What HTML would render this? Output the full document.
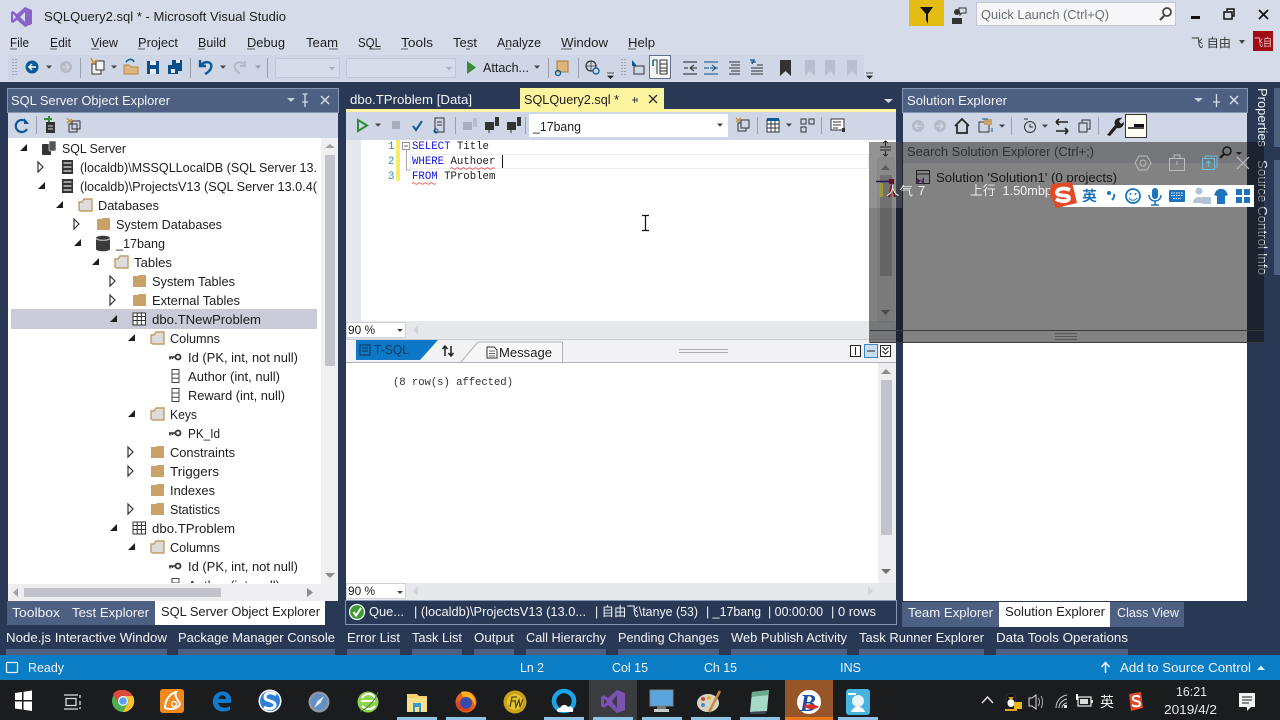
<!DOCTYPE html>
<html><head><meta charset="utf-8"><title>SQLQuery2.sql - Microsoft Visual Studio</title>
<style>
html,body{margin:0;padding:0;width:1280px;height:720px;overflow:hidden;background:#293955}
svg{display:block}
text{font-family:"Liberation Sans","Noto Sans CJK SC",sans-serif;font-size:13px;fill:#1e1e1e}
.w text,text.w{fill:#f2f4f8}
.m,.m text{font-family:"Liberation Mono","Noto Sans CJK SC",monospace;font-size:10.7px}
</style></head><body>
<svg width="1280" height="720" viewBox="0 0 1280 720" xmlns="http://www.w3.org/2000/svg">
<defs>
<g id="af"><path d="M5 -4V3H-2Z" fill="#1e1e1e"/></g>
<g id="ah"><path d="M-2 -5L3 0L-2 5Z" fill="#fff" stroke="#333" stroke-width="1.2"/></g>
<g id="fc"><path d="M0 -5H5L6 -6H13V6H0Z" fill="#c9a26a"/></g>
<g id="fo"><path d="M0 5V-3L3 -3L5 -6H13V6H2Z" fill="#dcdcdc" stroke="#c29c64" stroke-width="1.4"/></g>
<g id="tb"><rect x="0" y="-6" width="12.500" height="12" fill="#fff" stroke="#333"/><path d="M0 -2.500H12.500M0 1.500H12.500M4.200 -6V6M8.400 -6V6" stroke="#333" fill="none"/></g>
<g id="ky"><circle cx="9" cy="0" r="2.500" fill="none" stroke="#333" stroke-width="1.800"/><path d="M0 0H7M1 0V2.500M3.500 0V2" stroke="#333" stroke-width="1.500" fill="none"/></g>
<g id="cl"><rect x="0" y="-6.500" width="7" height="13" fill="#fff" stroke="#444"/><path d="M0 -2H7M0 2.200H7" stroke="#444"/></g>
<g id="dn"><path d="M-3 -1.500H3L0 1.800Z" fill="#444"/></g>
<g id="sv"><rect x="0" y="-7" width="11" height="14" fill="#333"/><path d="M1.500 -4H9.500M1.500 0H9.500M1.500 4H9.500" stroke="#ddd" stroke-width="1.300"/></g>
<clipPath id="tree"><rect x="8" y="138" width="310" height="445"/></clipPath>
</defs>

<!-- chrome -->
<rect width="1280" height="82" fill="#d6dbe9"/>
<rect y="82" width="1280" height="573" fill="#293955"/>
<path fill-rule="evenodd" d="M25 7L32 10V24L25 27L17 20L13 23L11 22V12L13 11L17 14ZM25 12L20 17L25 22ZM13 14V20L16 17Z" fill="#8a63c9"/>
<text x="44" y="21" textLength="242" lengthAdjust="spacingAndGlyphs">SQLQuery2.sql * - Microsoft Visual Studio</text>

<!-- menu -->
<g>
<text x="10" y="47" textLength="19" lengthAdjust="spacingAndGlyphs">File</text>
<text x="50" y="47" textLength="21" lengthAdjust="spacingAndGlyphs">Edit</text>
<text x="91" y="47" textLength="27" lengthAdjust="spacingAndGlyphs">View</text>
<text x="138" y="47" textLength="40" lengthAdjust="spacingAndGlyphs">Project</text>
<text x="198" y="47" textLength="28" lengthAdjust="spacingAndGlyphs">Build</text>
<text x="247" y="47" textLength="38" lengthAdjust="spacingAndGlyphs">Debug</text>
<text x="306" y="47" textLength="32" lengthAdjust="spacingAndGlyphs">Team</text>
<text x="358" y="47" textLength="23" lengthAdjust="spacingAndGlyphs">SQL</text>
<text x="401" y="47" textLength="32" lengthAdjust="spacingAndGlyphs">Tools</text>
<text x="453" y="47" textLength="24" lengthAdjust="spacingAndGlyphs">Test</text>
<text x="497" y="47" textLength="44" lengthAdjust="spacingAndGlyphs">Analyze</text>
<text x="561" y="47" textLength="47" lengthAdjust="spacingAndGlyphs">Window</text>
<text x="628" y="47" textLength="27" lengthAdjust="spacingAndGlyphs">Help</text>
<path d="M10 49H17M50 49H57M91 49H99M138 49H145M198 49H205M247 49H255M329 49H338M369 49H381M401 49H408M466 49H470M505 49H511M561 49H572M628 49H636" stroke="#333" stroke-width=".8"/>
</g>

<!-- top right -->
<rect x="909" y="0" width="35" height="26" fill="#e3bd12"/>
<path d="M920 7H933L928 14V24L926 20V14Z" fill="#111"/>
<circle cx="957" cy="12" r="3" fill="#333"/><path d="M952 24V18H962V24Z" fill="#333"/><path d="M959 8H966V13H962L960 15V13H959Z" fill="none" stroke="#333"/>
<rect x="976.500" y="2.500" width="199" height="23" fill="#f6f6f8" stroke="#c0c6d6"/>
<text x="981" y="19" textLength="128" lengthAdjust="spacingAndGlyphs" style="fill:#6a6e78">Quick Launch (Ctrl+Q)</text>
<circle cx="1167" cy="12" r="4" fill="none" stroke="#444" stroke-width="1.800"/><path d="M1164 16L1160 20" stroke="#444" stroke-width="2.200"/>
<rect x="1191" y="16" width="9" height="3" fill="#111"/>
<rect x="1224" y="12" width="8" height="7" fill="none" stroke="#111" stroke-width="1.500"/><path d="M1227 11V9H1234V16H1232" fill="none" stroke="#111" stroke-width="1.500"/>
<path d="M1259 10L1268 19M1268 10L1259 19" stroke="#111" stroke-width="1.800"/>
<text x="1191" y="47" textLength="40" lengthAdjust="spacingAndGlyphs" style="font-size:12px;fill:#333">飞 自由</text>
<path d="M1239 40H1245L1242 44Z" fill="#444"/>
<rect x="1253" y="31" width="20" height="20" fill="#a00c14"/>
<text x="1254" y="46" textLength="18" lengthAdjust="spacingAndGlyphs" style="font-size:11px;fill:#e8c8c8">飞自</text>

<!-- main toolbar -->
<rect x="8" y="55" width="856" height="25" fill="#cfd6e5"/>
<path d="M13 59V77M16 59V77" stroke="#8f97a8" stroke-width="1.500" stroke-dasharray="1 2"/>
<circle cx="32" cy="67" r="6.500" fill="#0b5a96"/><path d="M29 67H36M32 64L29 67L32 70" stroke="#fff" stroke-width="1.500" fill="none"/>
<use href="#dn" x="49" y="67"/>
<circle cx="66" cy="67" r="6" fill="#b4bac6"/><path d="M69 67H62M66 64L69 67L66 70" stroke="#dde" fill="none"/>
<path d="M80.500 58V78M190.500 58V78M267.500 58V78M548.500 58V78M578.500 58V78M675.500 58V78M770.500 58V78" stroke="#98a0b2"/>
<rect x="92" y="64" width="9" height="10" fill="#f4f4f4" stroke="#333"/><rect x="96" y="61" width="8" height="9" fill="#f4f4f4" stroke="#333"/><path d="M91 58L94 64M97 60L91 64" stroke="#c9912e" stroke-width="1.500"/>
<use href="#dn" x="114" y="67"/>
<path d="M124 74V65H129L131 67H138V74Z" fill="#dcb67a" stroke="#b58b4c"/><path d="M126 62C129 58 133 59 134 62" stroke="#0b5a96" fill="none" stroke-width="1.500"/>
<path d="M147 61H159V74H147Z" fill="#0b4f8a"/><rect x="150" y="61" width="6" height="4" fill="#e8ecf4"/><rect x="150" y="69" width="6" height="5" fill="#e8ecf4"/>
<path d="M172 60H182V71H178V74H168V65H172Z" fill="#0b4f8a"/><rect x="176" y="60" width="4" height="3" fill="#e8ecf4"/><rect x="171" y="69" width="4" height="4" fill="#e8ecf4"/>
<path d="M200 60V66H206M201 65C206 60 213 62 211 68C210 71 207 73 205 74" stroke="#0b5a96" stroke-width="2.400" fill="none"/>
<use href="#dn" x="223" y="67"/>
<path d="M245 61V66H240M245 65C240 60 233 63 235 68C236 71 239 73 240 74" stroke="#b4bac6" stroke-width="2" fill="none"/>
<use href="#dn" x="258" y="67" opacity=".4"/>
<rect x="275.500" y="58.500" width="64" height="19" fill="#d6dbe9" stroke="#c2c8d8"/><path d="M329 67H335L332 70Z" fill="#a8aebc"/>
<rect x="346.500" y="58.500" width="109" height="19" fill="#d6dbe9" stroke="#c2c8d8"/><path d="M446 67H452L449 70Z" fill="#a8aebc"/>
<path d="M467 61L476 67.500L467 74Z" fill="#388a34"/>
<text x="483" y="72" textLength="46" lengthAdjust="spacingAndGlyphs">Attach...</text>
<use href="#dn" x="537" y="67"/>
<rect x="557" y="61" width="11" height="11" fill="#dcb67a" stroke="#a97c3a"/><circle cx="558" cy="73" r="2.500" fill="none" stroke="#0b5a96" stroke-width="1.300"/>
<circle cx="591" cy="66" r="5" fill="none" stroke="#333" stroke-width="1.300"/><path d="M586 66H596M591 61V71" stroke="#333" stroke-width=".7"/><circle cx="596" cy="71" r="3" fill="#cfd6e5" stroke="#0b5a96" stroke-width="1.300"/>
<path d="M607 73H614M608 76H613L610.500 78.500Z" fill="#222" stroke="#222" stroke-width=".8"/>
<rect x="616" y="55" width="248" height="25" fill="#cfd6e5"/>
<path d="M622 59V77M625 59V77" stroke="#8f97a8" stroke-width="1.500" stroke-dasharray="1 2"/>
<path d="M632 60L637 66L632 66Z" fill="#0b5a96"/><path d="M634 66H644V74H634Z" fill="none" stroke="#333"/>
<rect x="649.500" y="55.500" width="21" height="23" fill="#f3f5f9" stroke="#5d6f8d"/>
<path d="M653 60H657V74M660 60H667V74H660ZM660 64H667M660 68H667M660 71H667" fill="none" stroke="#333"/><path d="M653 60V66" stroke="#0b5a96" stroke-width="1.500"/>
<path d="M683 62H697M683 74H697M684 68H688M690 68L694 65M690 68L694 71M691 68H697" stroke="#222" fill="none"/>
<path d="M704 62H718M704 74H718M704 68H709M716 68L712 65M716 68L712 71M710 68H718" stroke="#0b4f8a" fill="none"/>
<path d="M729 62H740M731 65H740M729 68H740M731 71H740M729 74H740" stroke="#333"/>
<path d="M751 62H756M757 65H763M751 68H763M751 71H763M751 74H763" stroke="#333"/><path d="M750 60H754L752 64" fill="none" stroke="#0b5a96" stroke-width="1.300"/>
<path d="M780 60H791V76L785.500 71L780 76Z" fill="#333"/>
<path d="M805 60H815V76L810 71L805 76Z" fill="#b8bfce"/><path d="M825 60H835V76L830 71L825 76Z" fill="#b8bfce"/><path d="M847 60H857V76L852 71L847 76Z" fill="#b8bfce"/>
<path d="M866 73H873M867 76H872L869.500 78.500Z" fill="#222" stroke="#222" stroke-width=".8"/>

<!-- LEFT PANEL -->
<rect x="7.500" y="88.500" width="331" height="24" fill="#4d6082" stroke="#8496b4"/>
<text class="w" x="11" y="105" textLength="159" lengthAdjust="spacingAndGlyphs">SQL Server Object Explorer</text>
<path d="M287 98H295L291 102Z" fill="#c4cede"/>
<path d="M305 94V102M302 102H308M305 102V107M302.500 94H307.500" stroke="#d6dbe9" stroke-width="1.300" fill="none"/>
<path d="M321 96L329 104M329 96L321 104" stroke="#d6dbe9" stroke-width="1.500"/>
<rect x="8" y="113" width="330" height="25" fill="#cfd6e5"/>
<rect x="8" y="138" width="330" height="463" fill="#fff"/>
<path d="M27 123A6 6 0 1 0 27 129" stroke="#0b5a96" stroke-width="2.200" fill="none"/><path d="M24 118V124H29Z" fill="#0b5a96"/>
<path d="M36.500 116V134" stroke="#98a0b2"/>
<rect x="46" y="122" width="9" height="11" fill="#333"/><path d="M44 119H52M49 116V122" stroke="#3a8a3a" stroke-width="2"/><path d="M48 126H53M48 129H53" stroke="#ddd"/>
<rect x="69" y="124" width="8" height="8" fill="none" stroke="#333"/><rect x="72" y="121" width="8" height="8" fill="none" stroke="#333"/><path d="M67 118L71 123M72 119L67 123" stroke="#c9912e" stroke-width="1.400"/>

<rect x="11" y="309" width="306" height="20" fill="#cacad8"/>
<g clip-path="url(#tree)">
<use href="#af" x="22" y="148"/>
<rect x="42" y="144" width="9" height="11" rx="1" fill="#333"/><rect x="49" y="141" width="7" height="10" rx="1" fill="#555" stroke="#fff" stroke-width=".6"/>
<text x="62" y="153" textLength="64" lengthAdjust="spacingAndGlyphs">SQL Server</text>
<use href="#ah" x="40" y="167"/><use href="#sv" x="62" y="167"/>
<text x="80" y="172" textLength="237" lengthAdjust="spacingAndGlyphs">(localdb)\MSSQLLocalDB (SQL Server 13.</text>
<use href="#af" x="40" y="186"/><use href="#sv" x="62" y="186"/>
<text x="80" y="191" textLength="237" lengthAdjust="spacingAndGlyphs">(localdb)\ProjectsV13 (SQL Server 13.0.4(</text>
<use href="#af" x="58" y="205"/><use href="#fo" x="79" y="205"/>
<text x="98" y="210" textLength="61" lengthAdjust="spacingAndGlyphs">Databases</text>
<use href="#ah" x="76" y="224"/><use href="#fc" x="97" y="224"/>
<text x="116" y="229" textLength="106" lengthAdjust="spacingAndGlyphs">System Databases</text>
<use href="#af" x="76" y="243"/>
<path d="M96 238C96 235 110 235 110 238V249C110 252 96 252 96 249Z" fill="#3a3a3a"/><path d="M96 238C96 241 110 241 110 238" stroke="#ccc" fill="none"/>
<text x="116" y="248" textLength="49" lengthAdjust="spacingAndGlyphs">_17bang</text>
<use href="#af" x="94" y="262"/><use href="#fo" x="115" y="262"/>
<text x="134" y="267" textLength="38" lengthAdjust="spacingAndGlyphs">Tables</text>
<use href="#ah" x="112" y="281"/><use href="#fc" x="133" y="281"/>
<text x="152" y="286" textLength="83" lengthAdjust="spacingAndGlyphs">System Tables</text>
<use href="#ah" x="112" y="300"/><use href="#fc" x="133" y="300"/>
<text x="152" y="305" textLength="88" lengthAdjust="spacingAndGlyphs">External Tables</text>
<use href="#af" x="112" y="319"/><use href="#tb" x="133" y="319"/>
<text x="152" y="324" textLength="109" lengthAdjust="spacingAndGlyphs">dbo.TNewProblem</text>
<use href="#af" x="130" y="338"/><use href="#fo" x="151" y="338"/>
<text x="170" y="343" textLength="50" lengthAdjust="spacingAndGlyphs">Columns</text>
<use href="#ky" x="169" y="357"/>
<text x="188" y="362" textLength="110" lengthAdjust="spacingAndGlyphs">Id (PK, int, not null)</text>
<use href="#cl" x="172" y="376"/>
<text x="188" y="381" textLength="92" lengthAdjust="spacingAndGlyphs">Author (int, null)</text>
<use href="#cl" x="172" y="395"/>
<text x="188" y="400" textLength="97" lengthAdjust="spacingAndGlyphs">Reward (int, null)</text>
<use href="#af" x="130" y="414"/><use href="#fo" x="151" y="414"/>
<text x="170" y="419" textLength="27" lengthAdjust="spacingAndGlyphs">Keys</text>
<use href="#ky" x="169" y="433"/>
<text x="188" y="438" textLength="32" lengthAdjust="spacingAndGlyphs">PK_Id</text>
<use href="#ah" x="130" y="452"/><use href="#fc" x="151" y="452"/>
<text x="170" y="457" textLength="65" lengthAdjust="spacingAndGlyphs">Constraints</text>
<use href="#ah" x="130" y="471"/><use href="#fc" x="151" y="471"/>
<text x="170" y="476" textLength="49" lengthAdjust="spacingAndGlyphs">Triggers</text>
<use href="#fc" x="151" y="490"/>
<text x="170" y="495" textLength="45" lengthAdjust="spacingAndGlyphs">Indexes</text>
<use href="#ah" x="130" y="509"/><use href="#fc" x="151" y="509"/>
<text x="170" y="514" textLength="50" lengthAdjust="spacingAndGlyphs">Statistics</text>
<use href="#af" x="112" y="528"/><use href="#tb" x="133" y="528"/>
<text x="152" y="533" textLength="83" lengthAdjust="spacingAndGlyphs">dbo.TProblem</text>
<use href="#af" x="130" y="547"/><use href="#fo" x="151" y="547"/>
<text x="170" y="552" textLength="50" lengthAdjust="spacingAndGlyphs">Columns</text>
<use href="#ky" x="169" y="566"/>
<text x="188" y="571" textLength="110" lengthAdjust="spacingAndGlyphs">Id (PK, int, not null)</text>
<use href="#cl" x="172" y="585"/>
<text x="188" y="590" textLength="92" lengthAdjust="spacingAndGlyphs">Author (int, null)</text>
</g>
<rect x="321" y="138" width="17" height="447" fill="#f0f0f3"/>
<rect x="325" y="155" width="10" height="211" fill="#c3c4cb"/>
<path d="M325 148H335L330 144Z" fill="#a0a2aa"/><path d="M325 573H335L330 578Z" fill="#8a8c94"/>
<rect x="8" y="584" width="330" height="17" fill="#eeeef1"/>
<rect x="24" y="588" width="197" height="9" fill="#c3c4cb"/>
<path d="M18 588V597L13 592.500Z" fill="#a0a2aa"/><path d="M307 588V597L313 592.500Z" fill="#8a8c94"/>
<rect x="7" y="601" width="148" height="24" fill="#4d6082"/>
<rect x="155" y="601" width="170" height="24" fill="#fff"/>
<text class="w" x="12" y="617" textLength="48" lengthAdjust="spacingAndGlyphs">Toolbox</text>
<text class="w" x="72" y="617" textLength="77" lengthAdjust="spacingAndGlyphs">Test Explorer</text>
<text x="161" y="616" textLength="159" lengthAdjust="spacingAndGlyphs">SQL Server Object Explorer</text>

<!-- CENTER tabs -->
<rect x="520" y="88" width="144" height="21" fill="#fdf4a0"/>
<rect x="346" y="109" width="550" height="3" fill="#fdf4a0"/>
<text class="w" x="350" y="104" textLength="122" lengthAdjust="spacingAndGlyphs">dbo.TProblem [Data]</text>
<text x="524" y="104" textLength="95" lengthAdjust="spacingAndGlyphs">SQLQuery2.sql *</text>
<path d="M632 100H637M634.500 97V103M637 98V102" stroke="#444" fill="none"/>
<path d="M649 95L657 103M657 95L649 103" stroke="#333" stroke-width="1.400"/>
<path d="M884 99H893L888.500 103Z" fill="#d6dbe9"/>
<rect x="346" y="112" width="550" height="28" fill="#cfd6e5"/>
<path d="M358 120L367 125.500L358 131Z" fill="none" stroke="#2f8a34" stroke-width="2"/>
<use href="#dn" x="378" y="125"/>
<rect x="392" y="121" width="8" height="8" fill="#a8aebc"/>
<path d="M413 126L416 130L422 121" stroke="#0b5a96" stroke-width="2" fill="none"/>
<rect x="435" y="118" width="9" height="14" fill="none" stroke="#333"/><path d="M437 122H442M437 125H442" stroke="#333"/><circle cx="436" cy="131" r="2" fill="none" stroke="#0b5a96"/>
<path d="M455.500 117V134M525.500 117V134M757.500 117V134M821.500 117V134" stroke="#98a0b2"/>
<rect x="463" y="122" width="9" height="8" fill="#a8aebc"/><rect x="473" y="118" width="4" height="9" fill="#b8bfce"/>
<rect x="485" y="122" width="9" height="8" fill="#333"/><rect x="495" y="117" width="4" height="9" fill="#333"/><path d="M489 130V133" stroke="#333"/>
<rect x="507" y="122" width="9" height="8" fill="#333"/><rect x="517" y="117" width="4" height="9" fill="#333"/><path d="M511 130V133" stroke="#333"/>
<rect x="529" y="114" width="199" height="23" fill="#fff"/>
<text x="533" y="131" textLength="48" lengthAdjust="spacingAndGlyphs">_17bang</text>
<use href="#dn" x="720" y="125"/>
<rect x="738" y="123" width="8" height="8" fill="none" stroke="#333"/><rect x="741" y="120" width="8" height="8" fill="#cfd6e5" stroke="#333"/><path d="M736 118L740 122M741 118L736 122" stroke="#c9912e" stroke-width="1.300"/>
<rect x="767" y="120" width="12" height="12" fill="#fff" stroke="#333"/><path d="M767 124H779M767 128H779M771 120V132M775 120V132" stroke="#333"/><rect x="767" y="118" width="12" height="3" fill="#0b5a96"/>
<use href="#dn" x="789" y="125"/>
<rect x="801" y="119" width="5" height="5" fill="none" stroke="#333"/><rect x="809" y="119" width="5" height="5" fill="none" stroke="#333"/><rect x="801" y="127" width="5" height="5" fill="none" stroke="#333"/>
<rect x="831" y="119" width="13" height="11" fill="#fff" stroke="#333"/><path d="M833 122H841M833 125H841M833 128H838" stroke="#333"/><rect x="842" y="128" width="3" height="4" fill="#333"/>

<!-- editor -->
<rect x="346" y="140" width="550" height="181" fill="#fff"/>
<rect x="346" y="140" width="15" height="181" fill="#e7e8ec"/>
<rect x="396" y="140" width="4" height="41" fill="#f5ec6e"/>
<rect x="410.500" y="154.500" width="458" height="14" fill="none" stroke="#ececf2"/>
<g class="m">
<text x="388" y="149" style="fill:#2b91af">1</text>
<text x="388" y="164" style="fill:#2b91af">2</text>
<text x="388" y="179" style="fill:#2b91af">3</text>
<text x="412" y="149"><tspan style="fill:#1414e6">SELECT</tspan> Title</text>
<text x="412" y="164"><tspan style="fill:#1414e6">WHERE</tspan> Authoer</text>
<text x="412" y="179"><tspan style="fill:#1414e6">FROM</tspan> TProblem</text>
</g>
<rect x="402.500" y="142.500" width="7" height="7" fill="#fff" stroke="#999"/><path d="M404 146H408" stroke="#666"/><path d="M406.500 150V170H411" stroke="#aaa" fill="none"/>
<path d="M450 168.500q1.500 -1.500 3 0t3 0t3 0t3 0t3 0t3 0t3 0t3 0t3 0t3 0t3 0t3 0t3 0t3 0t3 0" fill="none" stroke="#e03030" stroke-width=".8"/>
<path d="M412 183.500q1.500 -1.500 3 0t3 0t3 0t3 0t3 0t3 0t3 0t3 0" fill="none" stroke="#e03030" stroke-width=".8"/>
<path d="M502.500 155V168" stroke="#111"/>
<path d="M642 215.500H649M642 230.500H649M645.500 216V230" stroke="#111" stroke-width="1.200"/>

<rect x="346" y="321" width="550" height="18" fill="#e7e8ec"/>
<rect x="346.500" y="322.500" width="59" height="15" fill="#fff" stroke="#cfd2d8"/>
<text x="348" y="334" textLength="27" lengthAdjust="spacingAndGlyphs" style="font-size:12px">90 %</text>
<path d="M397 329H403L400 332Z" fill="#444"/>
<path d="M418 325V335L413 330Z" fill="#d2d4da"/>
<rect x="346" y="339" width="550" height="23" fill="#f2f2f4"/>
<path d="M346 339.500H896" stroke="#c9ccd2"/><path d="M346 362.500H896" stroke="#b0b3ba"/>
<path d="M356 340H438L420 360H356Z" fill="#0c78c6"/>
<rect x="360" y="345" width="10" height="10" fill="none" stroke="#10305a"/><path d="M362 348H368M362 351H368" stroke="#10305a"/>
<text x="374" y="354" textLength="35" lengthAdjust="spacingAndGlyphs" style="fill:#123a6a">T-SQL</text>
<path d="M445 356V346M442.500 349L445 346L447.500 349M451 346V356M448.500 353L451 356L453.500 353" fill="none" stroke="#222" stroke-width="1.500"/>
<path d="M461 362L478 342H562.500V362" fill="#f7f7f9" stroke="#b0b3ba"/>
<path d="M487 347H494L497 350V358H487Z" fill="#fff" stroke="#333"/><path d="M489 351H495M489 353.500H495M489 356H495" stroke="#333" stroke-width=".7"/>
<text x="499" y="357" textLength="53" lengthAdjust="spacingAndGlyphs">Message</text>
<path d="M679 349.500H728M679 352.500H728" stroke="#a9abb2"/>
<rect x="850.500" y="345.500" width="10" height="11" fill="#fff" stroke="#222"/><path d="M855.500 347V355" stroke="#222"/>
<rect x="864.500" y="344.500" width="13" height="13" fill="#c9def2" stroke="#3a86c8"/><path d="M867 351H875" stroke="#222"/>
<rect x="880.500" y="345.500" width="10" height="11" fill="#fff" stroke="#222"/><path d="M882.500 347L885.500 350L888.500 347M882.500 351L885.500 354L888.500 351" stroke="#222" fill="none"/>

<!-- results -->
<rect x="346" y="363" width="550" height="220" fill="#fff"/>
<rect x="878" y="363" width="18" height="220" fill="#eeeef1"/>
<rect x="881" y="380" width="11" height="155" fill="#c3c4cb"/>
<path d="M881 374H891L886 369Z" fill="#8a8c94"/><path d="M881 569H891L886 574Z" fill="#6f7178"/>
<text class="m" x="393" y="385" textLength="120" style="fill:#333">(8 row(s) affected)</text>
<rect x="346" y="583" width="550" height="18" fill="#e7e8ec"/>
<rect x="346.500" y="583.500" width="59" height="15" fill="#fff" stroke="#cfd2d8"/>
<text x="348" y="595" textLength="27" lengthAdjust="spacingAndGlyphs" style="font-size:12px">90 %</text>
<path d="M397 591H403L400 594Z" fill="#444"/>
<path d="M418 586V596L413 591Z" fill="#d2d4da"/><path d="M868 586V596L873 591Z" fill="#d2d4da"/>
<!-- query status -->
<rect x="345.500" y="600.500" width="551" height="24" fill="#293955" stroke="#8496b4"/>
<circle cx="357" cy="612" r="7.500" fill="#3f9c35" stroke="#fff" stroke-width="1.200"/><path d="M353.500 612L356 615.500L361 608" stroke="#fff" stroke-width="2" fill="none"/>
<g class="w">
<text x="369" y="616" textLength="35" lengthAdjust="spacingAndGlyphs">Que...</text>
<text x="414" y="616" textLength="172" lengthAdjust="spacingAndGlyphs">| (localdb)\ProjectsV13 (13.0...</text>
<text x="595" y="616" textLength="103" lengthAdjust="spacingAndGlyphs">| 自由飞\tanye (53)</text>
<text x="706" y="616" textLength="55" lengthAdjust="spacingAndGlyphs">| _17bang</text>
<text x="768" y="616" textLength="55" lengthAdjust="spacingAndGlyphs">| 00:00:00</text>
<text x="831" y="616" textLength="45" lengthAdjust="spacingAndGlyphs">| 0 rows</text>
</g>

<!-- SOLUTION EXPLORER -->
<rect x="902.500" y="88.500" width="345" height="24" fill="#4d6082" stroke="#8496b4"/>
<text class="w" x="907" y="105" textLength="100" lengthAdjust="spacingAndGlyphs">Solution Explorer</text>
<path d="M1194 98H1203L1198.500 102Z" fill="#c4cede"/>
<path d="M1216.500 94V102M1213 102H1220M1216.500 102V107" stroke="#d6dbe9" stroke-width="1.300" fill="none"/>
<path d="M1230 96L1238 104M1238 96L1230 104" stroke="#d6dbe9" stroke-width="1.500"/>
<rect x="903" y="113" width="344" height="29" fill="#cfd6e5"/>
<circle cx="918" cy="126" r="6" fill="#b4bac6"/><circle cx="940" cy="126" r="6" fill="#b4bac6"/>
<path d="M922 126H915M918 123L915 126L918 129M936 126H943M940 123L943 126L940 129" stroke="#dde" fill="none"/>
<path d="M955 126L962 119L969 126M957 125V133H967V125" fill="none" stroke="#222" stroke-width="1.700"/>
<rect x="979" y="122" width="10" height="10" fill="none" stroke="#333"/><rect x="984" y="119" width="8" height="6" fill="#c9a26a"/><path d="M982 119H988M992 128V132" stroke="#0b5a96"/>
<use href="#dn" x="1002" y="126"/>
<path d="M1011.500 117V135" stroke="#98a0b2"/>
<circle cx="1030" cy="127" r="5.500" fill="none" stroke="#333"/><path d="M1030 124V127H1033M1024 119H1028" stroke="#333" fill="none"/>
<use href="#dn" x="1045" y="126"/>
<path d="M1056 122H1068M1056 122L1059 119M1056 131H1068M1068 131L1065 128M1056 122L1059 125M1068 131L1065 134" stroke="#222" stroke-width="1.600" fill="none"/>
<rect x="1079" y="123" width="8" height="9" fill="none" stroke="#333"/><path d="M1082 123V120H1090V129H1087" fill="none" stroke="#333"/>
<path d="M1098.500 117V135" stroke="#98a0b2"/>
<path d="M1107 135L1115 125C1113 120 1118 117 1122 118L1119 121L1121 124L1124 122C1124 127 1120 129 1117 128L1110 136Z" fill="#222"/>
<rect x="1125.500" y="114.500" width="21" height="23" fill="#fffdf2" stroke="#333"/>
<rect x="1134" y="124" width="10" height="3" fill="#111"/><path d="M1128 128H1144" stroke="#111" stroke-width="1.500"/>
<rect x="903" y="142" width="344" height="21" fill="#e1e5ef"/>
<text x="907" y="156" textLength="187" lengthAdjust="spacingAndGlyphs" style="fill:#555">Search Solution Explorer (Ctrl+;)</text>
<circle cx="1227" cy="151" r="4" fill="none" stroke="#222" stroke-width="1.500"/><path d="M1224 154L1220 158" stroke="#222" stroke-width="2"/>
<path d="M1236 152H1242L1239 155Z" fill="#333"/>
<rect x="903" y="163" width="344" height="438" fill="#fff"/>
<rect x="916.500" y="170.500" width="13" height="13" fill="#fff" stroke="#333"/><path d="M917 174H930" stroke="#333"/>
<path d="M917 178L921 181L924 177V185L921 181L917 184Z" fill="#7a3fb0"/>
<text x="936" y="182" textLength="181" lengthAdjust="spacingAndGlyphs">Solution 'Solution1' (0 projects)</text>
<rect x="902" y="602" width="97" height="25" fill="#4d6082"/>
<rect x="999" y="602" width="111" height="25" fill="#fff"/>
<rect x="1110" y="602" width="74" height="25" fill="#4d6082"/>
<text class="w" x="908" y="617" textLength="85" lengthAdjust="spacingAndGlyphs">Team Explorer</text>
<text x="1005" y="616" textLength="100" lengthAdjust="spacingAndGlyphs">Solution Explorer</text>
<text class="w" x="1117" y="617" textLength="62" lengthAdjust="spacingAndGlyphs">Class View</text>

<!-- right strip -->
<rect x="1274" y="88" width="6" height="59" fill="#4d6082"/><rect x="1274" y="160" width="6" height="115" fill="#4d6082"/>
<text class="w" transform="translate(1258,88) rotate(90)" textLength="59" lengthAdjust="spacingAndGlyphs">Properties</text>
<text class="w" transform="translate(1258,160) rotate(90)" textLength="115" lengthAdjust="spacingAndGlyphs">Source Control Info</text>

<!-- translucent overlay window -->
<rect x="869" y="142" width="395" height="201" fill="#101010" fill-opacity=".52"/>
<rect x="869" y="142" width="33" height="66" fill="#fff" fill-opacity=".14"/>
<path d="M880 147H891M880 150H891M885.500 141V146M885.500 151V156M883 143L885.500 141L888 143M883 154L885.500 156L888 154" stroke="#222" fill="none"/>
<rect x="877" y="157" width="18" height="165" fill="#000" fill-opacity=".06"/>
<rect x="880" y="175" width="12" height="101" fill="#000" fill-opacity=".18"/>
<path d="M881 170H890L885.500 165Z" fill="#5a5a5a"/><path d="M881 310H890L885.500 315Z" fill="#4a4a4a"/>
<rect x="879" y="183" width="4" height="14" fill="#9b9b3a"/>
<path d="M876 181.500H893" stroke="#1a1a5a" stroke-width="1.500"/><rect x="889" y="179" width="5" height="5" fill="#6a1020"/>
<path d="M889 197L892 185L895 197" stroke="#7a1010" stroke-width="2" fill="none"/>
<path d="M870 330.500H1264M870 342.500H1264" stroke="#3a3a3a"/>
<path d="M1055 333.500H1077M1055 336.500H1077M1055 339.500H1077" stroke="#555"/>
<text x="886" y="195" textLength="27" lengthAdjust="spacingAndGlyphs" style="fill:#f0f0f0;font-size:12px">人气</text>
<text x="918" y="195" style="fill:#f0f0f0;font-size:13px">7</text>
<text x="970" y="195" textLength="82" lengthAdjust="spacingAndGlyphs" style="fill:#f0f0f0;font-size:13px">上行 &#160;1.50mbp</text>
<g fill="none" stroke="#bdbdbd">
<circle cx="1143" cy="163" r="3"/><path d="M1139 156H1147L1151 163L1147 170H1139L1135 163Z" stroke-linejoin="round"/>
<rect x="1169.500" y="158.500" width="15" height="12"/><path d="M1174 158V155H1180V158M1177 161V165"/>
</g>
<g fill="none" stroke="#6cc0dc"><rect x="1202.500" y="158.500" width="12" height="11"/><path d="M1205 158V156H1217V167H1215M1208.500 167V161M1206 163L1208.500 161L1211 163"/></g>
<path d="M1237 157L1249 169M1249 157L1237 169" stroke="#bdbdbd" stroke-width="1.200"/>

<!-- IME bar -->
<rect x="1063" y="185" width="191" height="22" fill="#fff"/>
<path d="M1052 184L1072 182L1077 203L1056 208L1049 193Z" fill="#e04a26"/>
<path d="M1070 190C1064 187 1056 189 1057 193C1058 197 1069 194 1069 198C1069 202 1061 202 1056 199" fill="none" stroke="#fff" stroke-width="3.800"/>
<text x="1082" y="201" textLength="15" lengthAdjust="spacingAndGlyphs" style="fill:#1c74bd;font-size:14px;font-weight:bold">英</text>
<circle cx="1109" cy="193" r="2" fill="#1c74bd"/><path d="M1114 194C1115 197 1113 199 1112 200" stroke="#1c74bd" stroke-width="2" fill="none"/>
<circle cx="1133" cy="196" r="7" fill="none" stroke="#1c74bd" stroke-width="1.800"/><circle cx="1130.500" cy="194" r="1" fill="#1c74bd"/><circle cx="1135.500" cy="194" r="1" fill="#1c74bd"/><path d="M1129 198C1131 201 1135 201 1137 198" stroke="#1c74bd" fill="none"/>
<rect x="1152" y="188" width="6" height="11" rx="3" fill="#1c74bd"/><path d="M1149 195C1149 203 1161 203 1161 195M1155 201V205M1151 205H1159" stroke="#1c74bd" stroke-width="1.500" fill="none"/>
<rect x="1169" y="190" width="16" height="12" rx="1" fill="#1c74bd"/><path d="M1171 193H1183M1171 195.500H1183M1173 198.500H1181" stroke="#fff" stroke-dasharray="1.500 1"/>
<circle cx="1199" cy="191" r="3.500" fill="#b4c4d4"/><path d="M1193 203C1193 195 1205 195 1205 203Z" fill="#b4c4d4"/><rect x="1202" y="197" width="9" height="7" fill="#b4c4d4"/>
<path d="M1216 191L1219 189H1223L1226 191L1228 195L1225 196V204H1217V196L1214 195Z" fill="#1c74bd"/>
<rect x="1236" y="189" width="6" height="6" fill="#1c74bd"/><rect x="1244" y="189" width="6" height="6" fill="#1c74bd"/><rect x="1236" y="197" width="6" height="6" fill="#1c74bd"/><rect x="1244" y="197" width="6" height="6" fill="#1c74bd"/>

<!-- tool windows row -->
<rect x="6" y="649" width="161" height="6" fill="#4d6082"/><rect x="178" y="649" width="157" height="6" fill="#4d6082"/><rect x="347" y="649" width="53" height="6" fill="#4d6082"/><rect x="412" y="649" width="50" height="6" fill="#4d6082"/><rect x="474" y="649" width="40" height="6" fill="#4d6082"/><rect x="526" y="649" width="80" height="6" fill="#4d6082"/><rect x="618" y="649" width="101" height="6" fill="#4d6082"/><rect x="731" y="649" width="116" height="6" fill="#4d6082"/><rect x="859" y="649" width="125" height="6" fill="#4d6082"/><rect x="996" y="649" width="132" height="6" fill="#4d6082"/>
<g class="w">
<text x="6" y="642" textLength="161" lengthAdjust="spacingAndGlyphs">Node.js Interactive Window</text>
<text x="178" y="642" textLength="157" lengthAdjust="spacingAndGlyphs">Package Manager Console</text>
<text x="347" y="642" textLength="53" lengthAdjust="spacingAndGlyphs">Error List</text>
<text x="412" y="642" textLength="50" lengthAdjust="spacingAndGlyphs">Task List</text>
<text x="474" y="642" textLength="40" lengthAdjust="spacingAndGlyphs">Output</text>
<text x="526" y="642" textLength="80" lengthAdjust="spacingAndGlyphs">Call Hierarchy</text>
<text x="618" y="642" textLength="101" lengthAdjust="spacingAndGlyphs">Pending Changes</text>
<text x="731" y="642" textLength="116" lengthAdjust="spacingAndGlyphs">Web Publish Activity</text>
<text x="859" y="642" textLength="125" lengthAdjust="spacingAndGlyphs">Task Runner Explorer</text>
<text x="996" y="642" textLength="132" lengthAdjust="spacingAndGlyphs">Data Tools Operations</text>
</g>

<!-- status bar -->
<rect y="655" width="1280" height="25" fill="#0b7dc4"/>
<g class="w">
<rect x="6.500" y="662.500" width="11" height="10" rx="1" fill="none" stroke="#e8f2fa" stroke-width="1.300"/>
<text x="28" y="672" textLength="36" lengthAdjust="spacingAndGlyphs">Ready</text>
<text x="520" y="672" textLength="24" lengthAdjust="spacingAndGlyphs">Ln 2</text>
<text x="612" y="672" textLength="36" lengthAdjust="spacingAndGlyphs">Col 15</text>
<text x="704" y="672" textLength="33" lengthAdjust="spacingAndGlyphs">Ch 15</text>
<text x="840" y="672" textLength="21" lengthAdjust="spacingAndGlyphs">INS</text>
<text x="1120" y="672" textLength="131" lengthAdjust="spacingAndGlyphs">Add to Source Control</text>
<path d="M1105.500 673V663M1101.500 667L1105.500 662.500L1109.500 667" stroke="#e8f2fa" stroke-width="1.500" fill="none"/>
<path d="M1257 670H1265L1261 665.500Z" fill="#e8f2fa"/>
</g>

<!-- taskbar -->
<rect y="680" width="1280" height="40" fill="#1b1c1e"/>
<rect x="589" y="680" width="48" height="40" fill="#3b3c40"/>
<rect x="785" y="680" width="48" height="40" fill="#96562a"/>
<g fill="#8fc3e6">
<rect x="397" y="717" width="40" height="3"/><rect x="446" y="717" width="40" height="3"/><rect x="544" y="717" width="40" height="3"/><rect x="593" y="717" width="40" height="3"/><rect x="642" y="717" width="40" height="3"/><rect x="691" y="717" width="40" height="3"/><rect x="740" y="717" width="40" height="3"/><rect x="838" y="717" width="40" height="3"/>
</g>
<rect x="785" y="717" width="48" height="3" fill="#e8781c"/>
<!-- win -->
<path d="M15 693L22 692V700H15ZM23.500 691.700L32 690.500V700H23.500ZM15 701.500H22V709.500L15 708.500ZM23.500 701.500H32V711L23.500 709.800Z" fill="#fff"/>
<!-- task view -->
<path d="M64 695H78M64 709H78M66 698.500H76V705.500H66ZM80 695V698M80 701V705M80 707V709" fill="none" stroke="#ddd" stroke-width="1.300"/>
<!-- chrome -->
<circle cx="123" cy="701" r="11" fill="#4caf50"/>
<path d="M123 690A11 11 0 0 1 133 696H123A5 5 0 0 0 118 703L113 694A11 11 0 0 1 123 690Z" fill="#dd4b3e"/>
<path d="M133 696A11 11 0 0 1 123 712L128 703A5 5 0 0 0 123 696Z" fill="#fbc02d"/>
<circle cx="123" cy="701" r="5" fill="#fff"/><circle cx="123" cy="701" r="3.800" fill="#5a9cf0"/>
<!-- uc -->
<rect x="160" y="689" width="24" height="24" rx="3" fill="#f08a1e"/><path d="M165 708C165 698 172 693 176 692C174 696 178 700 180 704C178 709 170 710 165 708Z" fill="none" stroke="#fff" stroke-width="2"/><circle cx="174" cy="704" r="2.500" fill="none" stroke="#fff" stroke-width="1.300"/>
<!-- edge -->
<path d="M213 703C212 694 220 690 226 692C230 694 232 698 231 703H218C219 708 226 709 230 706V710C224 713 214 712 213 703ZM218.500 699H226C226 694 219 694 218.500 699Z" fill="#0f7bd0"/>
<!-- sogou browser -->
<circle cx="270" cy="701" r="11.500" fill="#fff"/><circle cx="270" cy="701" r="10" fill="#2e80d8"/>
<path d="M276 695C271 691 265 693 265 697C265 702 275 700 275 705C275 709 268 710 264 707" fill="none" stroke="#fff" stroke-width="3"/>
<!-- safari -->
<circle cx="319" cy="702" r="10.500" fill="#8c96a4"/><circle cx="319" cy="702" r="8" fill="#5f8fc4"/><path d="M324 696L320.500 703L314 708L317.500 701Z" fill="#e8e8e8"/>
<!-- 360 ie -->
<circle cx="368" cy="702" r="10.500" fill="#8ed24e"/><path d="M361 701H375M362 698C366 692 372 693 375 698M362 706C366 710 372 710 375 706" stroke="#fff" stroke-width="2" fill="none"/><path d="M360 711C364 711 375 702 378 692" stroke="#3a8a22" fill="none"/>
<!-- explorer -->
<path d="M407 694H417L419 696H427V712H407Z" fill="#f3d26e"/><rect x="407" y="698" width="20" height="14" fill="#f8e08a"/><rect x="413" y="703" width="8" height="9" fill="#2f9bd0"/><rect x="415" y="707" width="4" height="5" fill="#f8e08a"/>
<!-- firefox -->
<circle cx="466" cy="702" r="10.500" fill="#e8601c"/><circle cx="466" cy="703" r="6" fill="#3a4aa8"/><path d="M461 692C470 689 477 697 475 706C473 699 469 696 463 697Z" fill="#f8b41e"/><path d="M456 703C457 711 467 714 473 708C466 711 460 708 458 700Z" fill="#d9401c"/>
<!-- fw -->
<circle cx="515" cy="702" r="11.500" fill="#c8a218"/><circle cx="515" cy="702" r="8" fill="#e4c436"/><path d="M510 707L512 697H517M511 701H515M515 700L516 707L519 700L520 707L523 699" stroke="#5a4a08" stroke-width="1.300" fill="none"/>
<!-- q -->
<circle cx="564" cy="701" r="10" fill="none" stroke="#19a6e8" stroke-width="4.500"/><path d="M560 708C562 704 566 704 568 707C571 705 574 708 573 712H558C556 711 557 708 560 708Z" fill="#fff"/>
<!-- VS -->
<path fill-rule="evenodd" d="M617 690L625 693V710L617 713L608 705L604 708L601 706V697L604 695L608 698ZM617 695L612 701.500L617 708ZM604 698.500V704.500L607 701.500Z" fill="#7952b3"/>
<!-- monitor -->
<rect x="650" y="690" width="23" height="16" fill="#5aa6dc" stroke="#7a8288"/><rect x="657" y="706" width="9" height="3" fill="#777"/><rect x="654" y="709" width="15" height="3" fill="#ccc"/>
<!-- palette -->
<ellipse cx="708" cy="703" rx="11" ry="9" fill="#d8d4c4"/><circle cx="703" cy="699" r="2" fill="#d04a3a"/><circle cx="709" cy="698" r="2" fill="#e8b03a"/><circle cx="703" cy="705" r="2" fill="#4a90d0"/><path d="M709 712L720 691" stroke="#c88a3a" stroke-width="2.500"/>
<!-- notepad -->
<path d="M752 692L769 690L767 711L750 712Z" fill="#a8d8c8"/><path d="M752 692L769 690L768.500 695L751.500 697Z" fill="#6aa890"/><path d="M751 712L767 711L765 714L749 714Z" fill="#445"/>
<!-- blog logo -->
<circle cx="809" cy="702" r="12" fill="#fff"/>
<text x="800" y="711" style="font-size:24px;font-weight:bold;font-style:italic;fill:#1c4fa0;font-family:'Liberation Serif',serif">B</text>
<path d="M803 706C808 704 813 703 819 707C814 710 809 710 803 706Z" fill="#d8302a"/>
<!-- live -->
<rect x="846" y="689" width="24" height="26" rx="3" fill="#46b4dc"/><circle cx="858" cy="701" r="6" fill="#e8f6fc"/><path d="M851 712C853 705 863 705 865 712Z" fill="#fff"/><path d="M848 694H856" stroke="#fff" stroke-width="2"/>
<!-- tray -->
<path d="M982 703L987.500 697L993 703" stroke="#e8e8e8" stroke-width="1.400" fill="none"/>
<ellipse cx="1011" cy="699" rx="5" ry="6" fill="#111" stroke="#555" stroke-width=".5"/><ellipse cx="1011" cy="703" rx="3.500" ry="4" fill="#fff"/><path d="M1005 710H1017" stroke="#e8a020" stroke-width="2"/><path d="M1008 697H1014L1011 700Z" fill="#e8a020"/><rect x="1014" y="702" width="8" height="7" fill="#e8b820"/>
<path d="M1029 698H1032L1036 695V709L1032 706H1029Z" fill="none" stroke="#ddd"/><path d="M1038 698C1040 700 1040 704 1038 706M1041 696C1043 699 1043 705 1041 708" stroke="#aaa" fill="none"/>
<path d="M1056 708C1056 702 1060 696 1067 695M1059 708C1059 704 1062 700 1067 699M1062 708C1062 706 1064 703 1067 703" stroke="#ccc" fill="none"/><rect x="1064" y="705" width="3" height="3" fill="#ddd"/>
<rect x="1078" y="697" width="13" height="9" fill="none" stroke="#ddd" stroke-width="1.300"/><rect x="1080" y="699" width="8" height="5" fill="#ddd"/><rect x="1091" y="700" width="2" height="3" fill="#ddd"/><path d="M1077 694V700" stroke="#fff" stroke-width="2"/>
<text x="1100" y="707" textLength="14" lengthAdjust="spacingAndGlyphs" style="fill:#f2f2f2;font-size:14px">英</text>
<path d="M1129 694L1141 692L1143 708L1131 711Z" fill="#e04a26"/>
<path d="M1140 697C1136 695 1132 696 1133 699C1134 702 1140 700 1140 704C1140 707 1135 707 1132 705" fill="none" stroke="#fff" stroke-width="2"/>
<text x="1176" y="696" textLength="31" lengthAdjust="spacingAndGlyphs" style="fill:#e8e8e8;font-size:13px">16:21</text>
<text x="1164" y="714" textLength="53" lengthAdjust="spacingAndGlyphs" style="fill:#e8e8e8;font-size:13px">2019/4/2</text>
<path d="M1239 693H1255V707H1251L1247 711V707H1239Z" fill="#f2f2f2"/><path d="M1242 697H1252M1242 700H1252M1242 703H1249" stroke="#1b1c1e"/>
</svg>
</body></html>
